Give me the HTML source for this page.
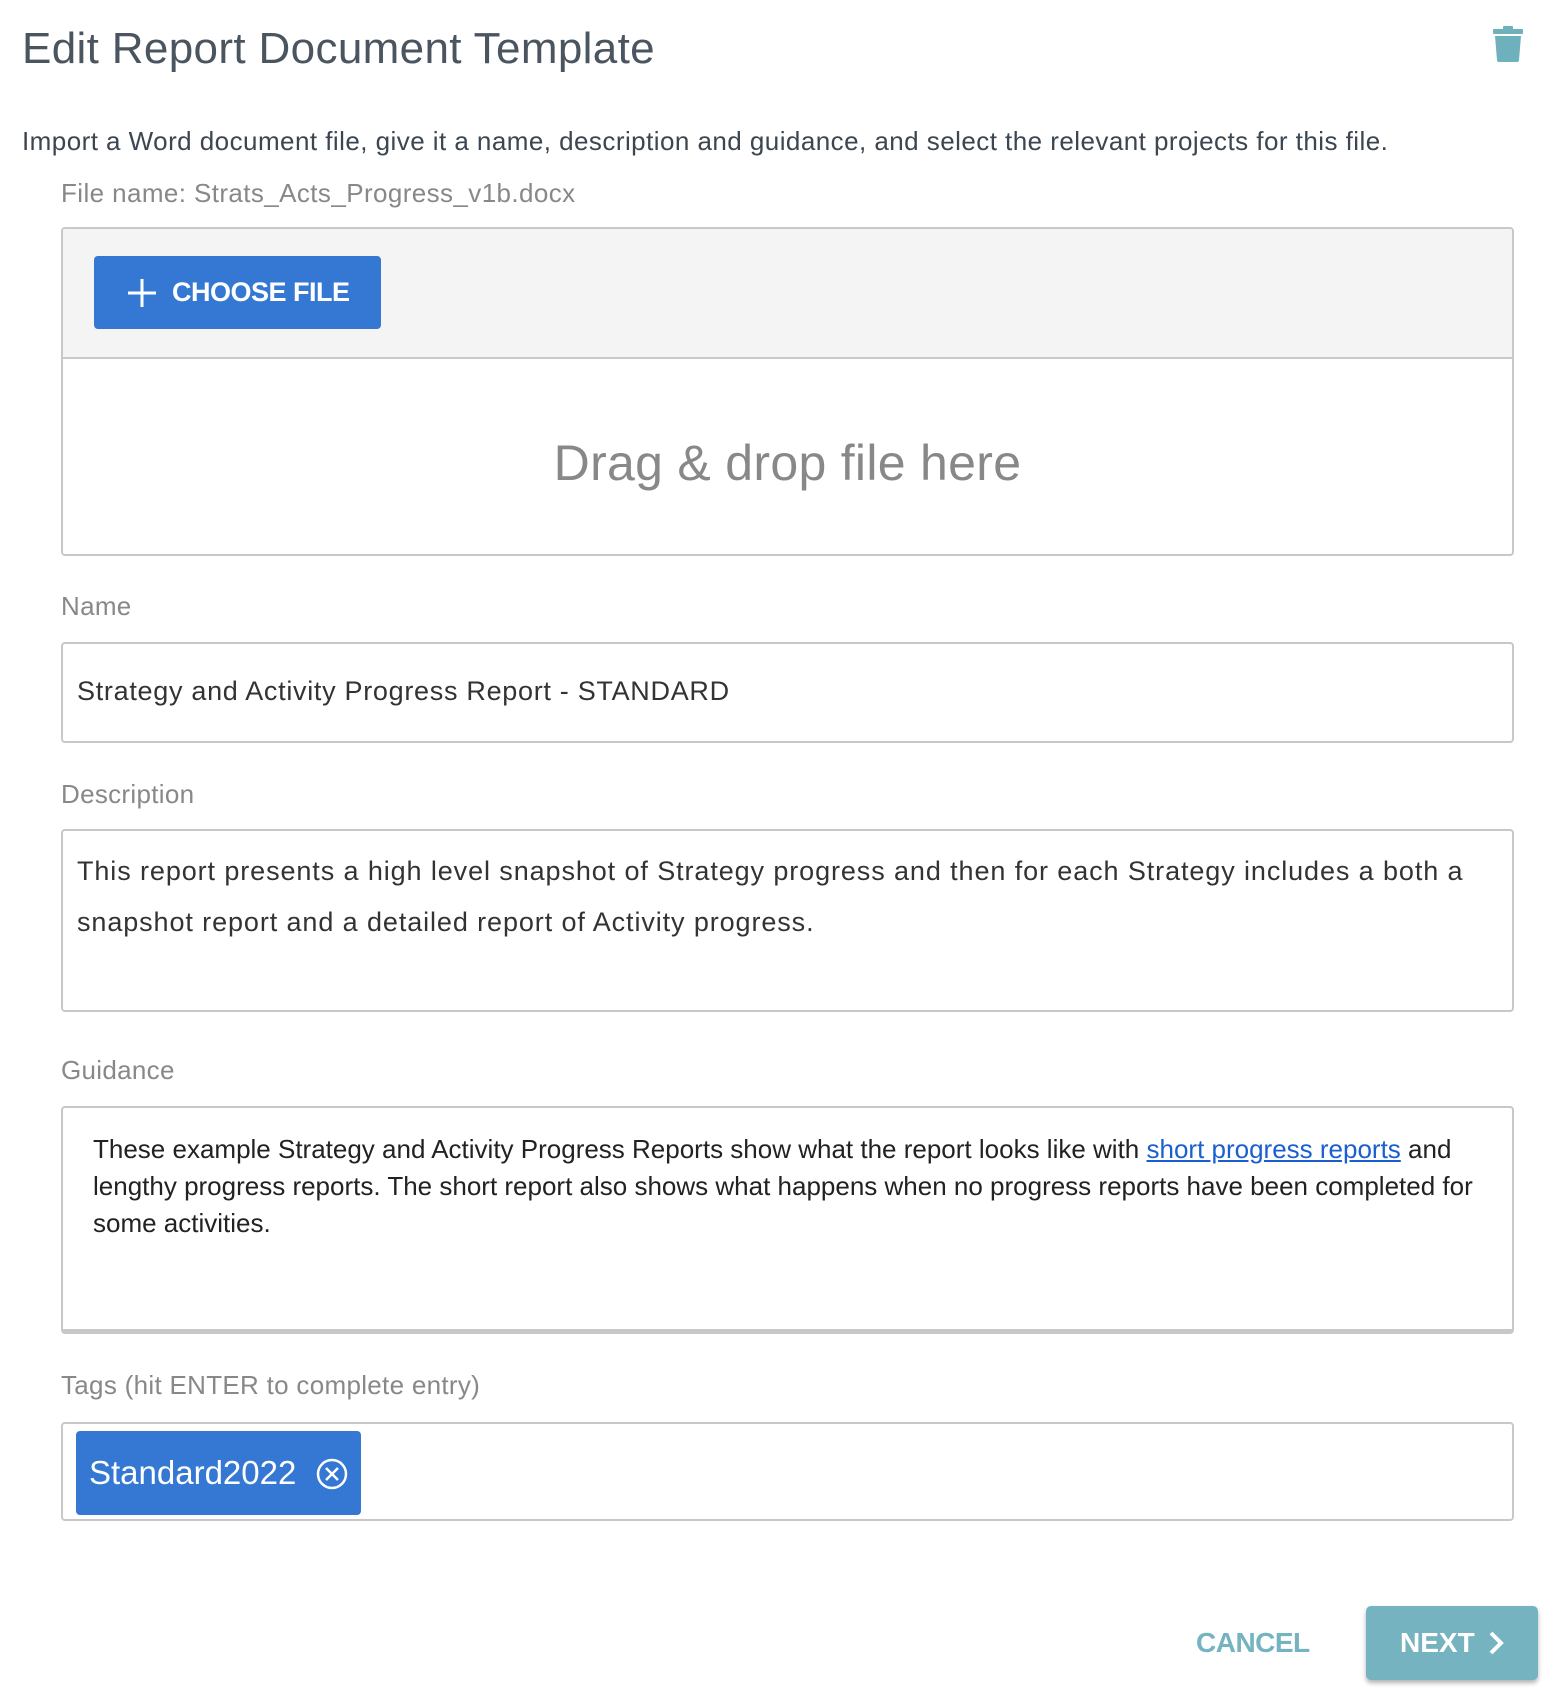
<!DOCTYPE html>
<html><head><meta charset="utf-8"><style>
*{box-sizing:border-box;margin:0;padding:0}
body{width:1554px;height:1698px;background:#fff;font-family:"Liberation Sans",sans-serif;position:relative;overflow:hidden}
.a{position:absolute;white-space:nowrap}
.lbl{color:#888;font-size:26px;left:61px;letter-spacing:0.3px}
.box{position:absolute;left:61px;width:1453px;border:2px solid #c8c8c8;border-radius:4px;background:#fff}
</style></head><body>
<div class="a" style="left:22px;top:24px;font-size:44px;color:#4a5560;letter-spacing:0.35px">Edit Report Document Template</div>
<svg class="a" style="left:1493px;top:26px" width="30" height="36" viewBox="0 0 30 36"><rect x="0" y="3" width="30" height="5" rx="1" fill="#6fb0bd"/><rect x="10" y="0" width="10" height="4" rx="1" fill="#6fb0bd"/><path d="M2 10h26l-2 24a2 2 0 0 1-2 2H6a2 2 0 0 1-2-2z" fill="#6fb0bd"/></svg>
<div class="a" style="left:22px;top:126px;font-size:26px;color:#3c4650;letter-spacing:0.45px">Import a Word document file, give it a name, description and guidance, and select the relevant projects for this file.</div>
<div class="a lbl" style="top:178px;letter-spacing:0.4px">File name: Strats_Acts_Progress_v1b.docx</div>
<div class="box" style="top:227px;height:329px;overflow:hidden">
 <div style="height:130px;background:#f4f4f4;border-bottom:2px solid #c8c8c8"></div>
 <div class="a" style="left:31px;top:27px;width:287px;height:73px;background:#3478d4;border-radius:4px;color:#fff;font-size:27px;font-weight:bold;line-height:73px;padding-left:78px;letter-spacing:-0.5px">CHOOSE FILE</div>
 <svg class="a" style="left:63px;top:48px" width="32" height="32"><path d="M16 2v28M2 16h28" stroke="#fff" stroke-width="3"/></svg>
 <div class="a" style="left:0;width:1449px;text-align:center;top:205px;font-size:50px;color:#888;letter-spacing:0.3px">Drag &amp; drop file here</div>
</div>
<div class="a lbl" style="top:591px">Name</div>
<div class="box" style="top:642px;height:101px"><div class="a" style="left:14px;top:32px;font-size:27px;color:#333;letter-spacing:0.7px">Strategy and Activity Progress Report - STANDARD</div></div>
<div class="a lbl" style="top:779px">Description</div>
<div class="box" style="top:829px;height:183px"><div class="a" style="left:14px;top:15px;font-size:27px;color:#333;line-height:51px;letter-spacing:0.9px">This report presents a high level snapshot of Strategy progress and then for each Strategy includes a both a<br>snapshot report and a detailed report of Activity progress.</div></div>
<div class="a lbl" style="top:1055px">Guidance</div>
<div class="box" style="top:1106px;height:228px;border-bottom:5px solid #c8c8c8"><div class="a" style="left:30px;top:23px;font-size:26px;color:#222;line-height:37px">These example Strategy and Activity Progress Reports show what the report looks like with <span style="color:#1a5fd0;text-decoration:underline">short progress reports</span> and<br>lengthy progress reports. The short report also shows what happens when no progress reports have been completed for<br>some activities.</div></div>
<div class="a lbl" style="top:1370px">Tags (hit ENTER to complete entry)</div>
<div class="box" style="top:1422px;height:99px"><div class="a" style="left:13px;top:7px;width:285px;height:84px;background:#3478d4;border-radius:4px;color:#fff;font-size:33px;line-height:84px;padding-left:13px">Standard2022</div>
<svg class="a" style="left:252px;top:33px" width="34" height="34"><circle cx="17" cy="17" r="14" fill="none" stroke="#fff" stroke-width="2.5"/><path d="M11 11l12 12M23 11l-12 12" stroke="#fff" stroke-width="2.5"/></svg></div>
<div class="a" style="left:1196px;top:1627px;font-size:28px;font-weight:bold;color:#75b3c0;letter-spacing:-0.5px">CANCEL</div>
<div class="a" style="left:1366px;top:1606px;width:172px;height:74px;background:#75b3c0;border-radius:5px;box-shadow:0 3px 5px rgba(0,0,0,.3);color:#fff;font-size:28px;font-weight:bold;line-height:74px;padding-left:34px">NEXT</div>
<svg class="a" style="left:1488px;top:1630px" width="16" height="26"><path d="M3 3l10 10-10 10" stroke="#fff" stroke-width="4" fill="none"/></svg>
</body></html>
